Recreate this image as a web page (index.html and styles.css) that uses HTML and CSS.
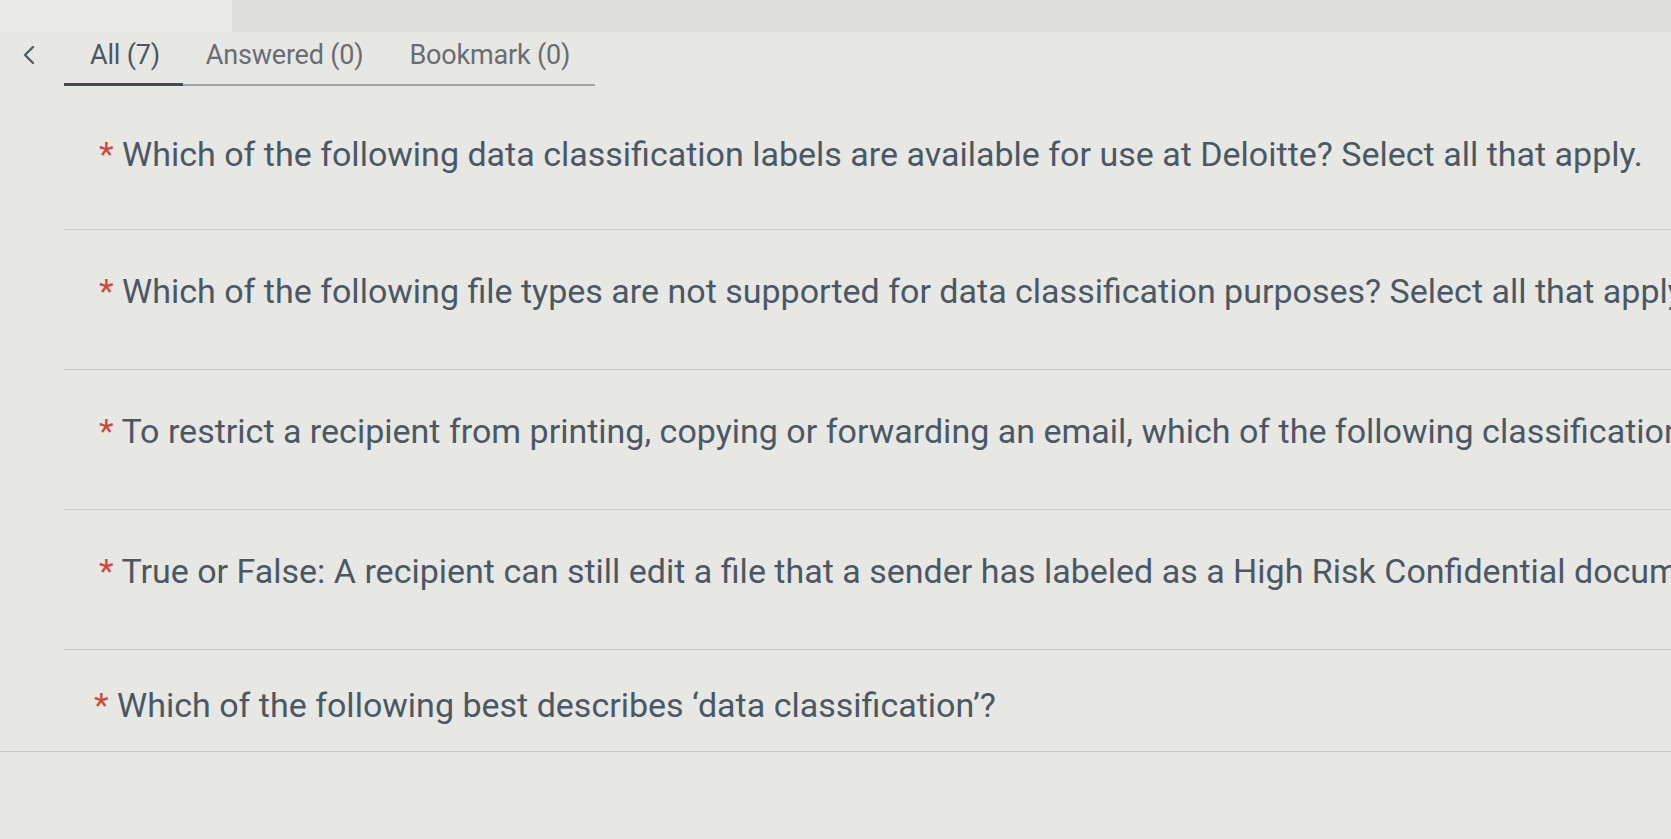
FILE: index.html
```html
<!DOCTYPE html>
<html lang="en">
<head>
<meta charset="utf-8">
<title>Questions</title>
<link rel="stylesheet" href="styles.css">
</head>
<body>
<div class="topband">
  <div class="topband-left"></div>
  <div class="topband-right"></div>
</div>
<nav class="tabbar">
  <button class="back" aria-label="Back">
    <svg width="16" height="22" viewBox="0 0 16 22"><path d="M13 3 L5 11 L13 19" fill="none" stroke="#4d5c68" stroke-width="2.4" stroke-linecap="round" stroke-linejoin="round"/></svg>
  </button>
  <ul class="tabs">
    <li class="tab active">All (7)</li>
    <li class="tab">Answered (0)</li>
    <li class="tab">Bookmark (0)</li>
  </ul>
</nav>
<section class="questions">
  <div class="q"><span class="req">*</span> Which of the following data classification labels are available for use at Deloitte? Select all that apply.</div>
  <div class="q"><span class="req">*</span> Which of the following file types are not supported for data classification purposes? Select all that apply.</div>
  <div class="q"><span class="req">*</span> To restrict a recipient from printing, copying or forwarding an email, which of the following classification labels should be used?</div>
  <div class="q"><span class="req">*</span> True or False: A recipient can still edit a file that a sender has labeled as a High Risk Confidential document.</div>
  <div class="q last"><span class="req">*</span> Which of the following best describes ‘data classification’?</div>
</section>
</body>
</html>
```

FILE: styles.css
```css
html, body {
  margin: 0;
  padding: 0;
  background: #e7e7e4;
  font-family: Roboto, "Liberation Sans", sans-serif;
  overflow: hidden;
}
.topband {
  display: flex;
  height: 32px;
}
.topband-left {
  width: 232px;
  background: #e9e9e6;
}
.topband-right {
  flex: 1;
  background: #dcdcd9;
}
.tabbar {
  display: flex;
  align-items: flex-start;
  padding-left: 20px;
}
.back {
  border: 0;
  background: none;
  padding: 0;
  margin-top: 12px;
  width: 44px;
  height: 22px;
  display: flex;
  align-items: center;
  justify-content: flex-start;
}
.tabs {
  list-style: none;
  margin: 0;
  padding: 0 2px 0 0;
  display: flex;
  border-bottom: 2px solid #a2a4a6;
}
.tab {
  font-size: 27px;
  line-height: 32px;
  padding: 7px 23px 12px;
  color: #6a6d71;
  letter-spacing: -0.2px;
  margin-bottom: -2px;
  border-bottom: 3px solid transparent;
}
.tab.active {
  color: #4a5864;
  padding-left: 26px;
  border-bottom-color: #3f4b55;
}
.questions {
  border-bottom: 1px solid #c4c6c7;
}
.q {
  margin-left: 64px;
  padding: 41px 0 58px 35px;
  font-size: 34px;
  line-height: 40px;
  color: #4b5864;
  white-space: nowrap;
  overflow: hidden;
  border-bottom: 1px solid #c8cacb;
}
.q:first-child {
  padding-top: 48px;
  padding-bottom: 55px;
}
.q.last {
  border-bottom: 0;
  padding: 35px 0 26px 30px;
}
.req {
  color: #cf4a3e;
}
```
